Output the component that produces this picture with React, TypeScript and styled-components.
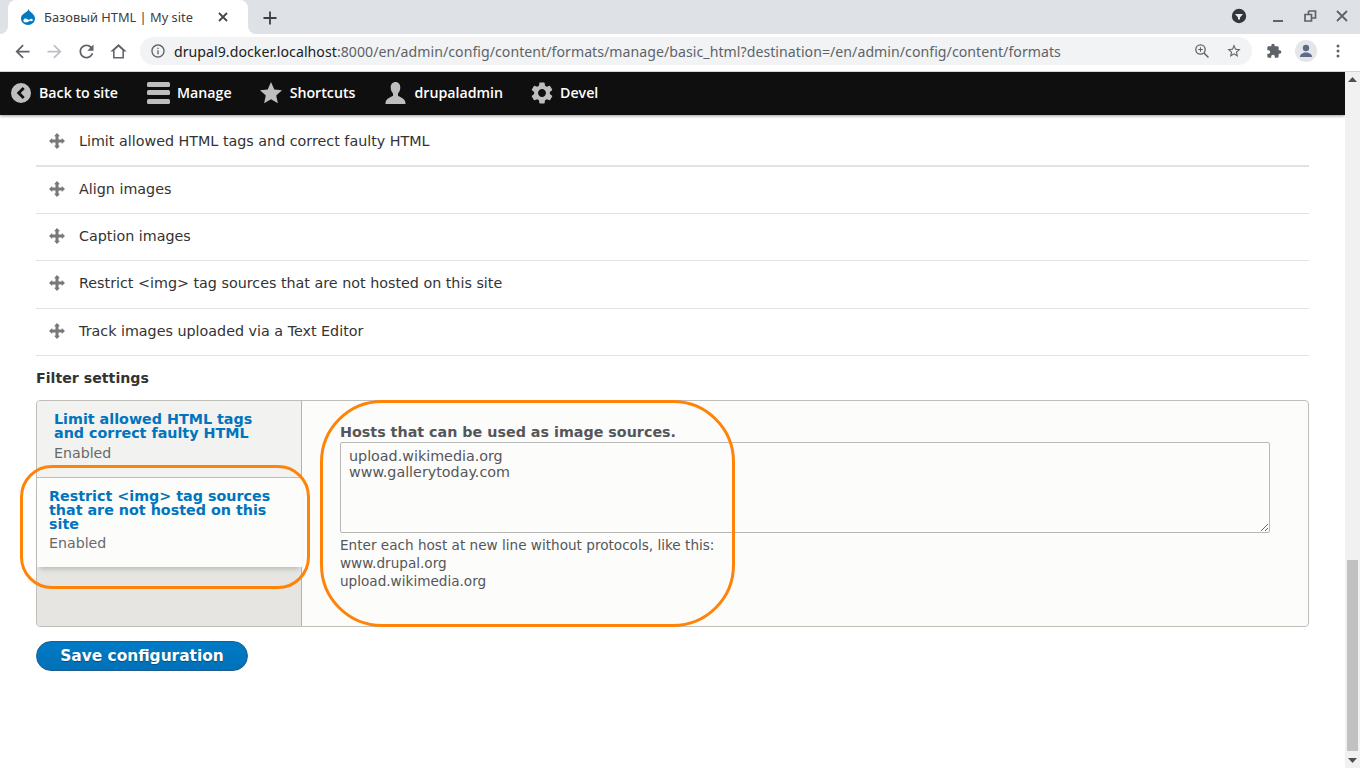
import React from "react";
import styled, { createGlobalStyle } from "styled-components";

const Global = createGlobalStyle`
  html, body { margin: 0; padding: 0; height: 768px; overflow: hidden; background: #fff; }
  * { box-sizing: border-box; }
`;

const Screen = styled.div`
  width: 1360px; height: 768px; display: flex; flex-direction: column; overflow: hidden;
`;
const TabStrip = styled.div`
  height: 34px; background: #dee1e6; display: flex; align-items: flex-end; padding-left: 8px; flex: none;
`;
const Tab = styled.div`
  position: relative; width: 240px; height: 34px; background: #fff; border-radius: 8px 8px 0 0;
  display: flex; align-items: center; padding: 0 0 0 12px; gap: 8px;
  &::before, &::after {
    content: ""; position: absolute; bottom: 0; width: 8px; height: 8px; background: #fff;
  }
  &::before { left: -8px; clip-path: path("M0 8 A8 8 0 0 0 8 0 L8 8 Z"); }
  &::after { right: -8px; clip-path: path("M8 8 A8 8 0 0 1 0 0 L0 8 Z"); }
`;
const TabTitle = styled.span`
  font: 400 12.85px "Noto Sans", sans-serif; color: #3c4043; flex: 1; white-space: nowrap;
`;
const TabClose = styled.svg`
  width: 16px; height: 16px; margin-right: 17px; flex: none;
`;
const NewTab = styled.svg`
  width: 18px; height: 18px; margin: 0 0 7px 13px; flex: none;
`;
const WindowControls = styled.div`
  margin-left: auto; align-self: stretch; display: flex; align-items: center; padding-bottom: 3px;
`;
const ProfileDot = styled.svg`
  width: 16px; height: 16px; margin-right: 23px;
`;
const WinButton = styled.svg`
  width: 16px; height: 16px; margin-right: 16px; flex: none;
  &:last-child { margin-right: 10px; }
`;

const AddressRow = styled.div`
  background: #fff; border-bottom: 1px solid #d3d5d8; flex: none;
  display: flex; align-items: center; padding: 0 0 3px 12px; height: 38px;
`;
const NavIcon = styled.svg<{ $gap?: number }>`
  width: 21px; height: 21px; flex: none; margin-right: ${(p) => p.$gap ?? 11}px;
`;
const UrlPill = styled.div`
  width: 1112px; height: 28px; border-radius: 14px; background: #f1f3f4; margin-left: 11px;
  display: flex; align-items: center; padding: 0 10px 0 10px; flex: none;
`;
const InfoIcon = styled.svg`
  width: 16px; height: 16px; flex: none; margin-right: 8px;
`;
const UrlText = styled.div`
  font: 400 14.13px "Noto Sans", sans-serif; color: #5f6368; flex: 1; white-space: nowrap; letter-spacing: .04px;
`;
const UrlHost = styled.span`
  color: #202124;
`;
const PillIcon = styled.svg<{ $gap: number }>`
  width: 16px; height: 16px; flex: none; margin-left: ${(p) => p.$gap}px;
`;
const Puzzle = styled.svg`
  width: 16px; height: 16px; fill: #5f6368; margin-left: 14px; flex: none;
`;
const Avatar = styled.div`
  width: 22px; height: 22px; border-radius: 50%; background: #e4e6ea; margin-left: 13px;
  display: flex; align-items: center; justify-content: center; flex: none;
`;
const Kebab = styled.svg`
  width: 16px; height: 16px; margin-left: 13px; flex: none;
`;

const Viewport = styled.div`
  flex: 1; display: flex; min-height: 0;
`;
const Page = styled.div`
  position: relative; flex: 1; min-width: 0; overflow: hidden; display: flex; flex-direction: column;
`;
const AdminBar = styled.nav`
  position: relative; z-index: 5; height: 43px; flex: none; background: #0f0f0f;
  box-shadow: 0 1px 3px rgba(0,0,0,.4); display: flex; align-items: center; padding: 0 0 1px 11px;
`;
const BarItem = styled.a<{ $gap: number }>`
  display: flex; align-items: center; color: #fff; font: 600 14.2px "Open Sans", sans-serif;
  margin-right: ${(p) => p.$gap}px; white-space: nowrap;
`;
const BarLabel = styled.span`
  margin-bottom: 2px;
`;
const BarIcon = styled.svg<{ $w: number; $gap: number }>`
  width: ${(p) => p.$w}px; height: 22px; margin-right: ${(p) => p.$gap}px; flex: none; fill: #bebebe;
`;

const Content = styled.main`
  padding: 0 36px; margin-top: -18px; display: flex; flex-direction: column;
`;
const WeightToggle = styled.a`
  align-self: flex-end; margin-right: 4px;
  font: 400 13px/18px "DejaVu Sans", sans-serif; color: #0074bd;
`;
const FilterRow = styled.div<{ $heavy?: boolean; $h: number }>`
  height: ${(p) => p.$h}px; display: flex; align-items: center;
  padding: ${(p) => (p.$heavy ? "2px 0 0 13px" : `0 0 ${p.$h - 45}px 13px`)};
  border-bottom: ${(p) => (p.$heavy ? 2 : 1)}px solid #e3e2de; gap: 14px;
  font: 400 14.3px "DejaVu Sans", sans-serif; color: #333;
`;
const Grip = styled.svg`
  width: 16px; height: 16px; flex: none;
`;
const SectionTitle = styled.h4`
  margin: 14px 0 13px; font: 700 14.2px/17px "DejaVu Sans", sans-serif; color: #333;
`;
const Panel = styled.div`
  height: 227px; border: 1px solid #bfbfba; border-radius: 4px; display: flex; background: #fcfcfa;
`;
const Side = styled.div`
  width: 265px; flex: none; background: #e6e5e1; border-right: 1px solid #b3b3ae;
  border-radius: 4px 0 0 4px; display: flex; flex-direction: column;
`;
const TabLink = styled.div<{ $active?: boolean }>`
  background: ${(p) => (p.$active ? "#fcfcfa" : "#f2f2f0")};
  height: ${(p) => (p.$active ? 90 : 76)}px;
  padding: ${(p) => (p.$active ? "11px 12px 0" : "11px 20px 0 17px")};
  margin-right: ${(p) => (p.$active ? "-1px" : "0")};
  border-top: ${(p) => (p.$active ? "1px solid #bfbfba" : "none")};
  box-shadow: ${(p) => (p.$active ? "0 5px 5px -3px rgba(0,0,0,.2)" : "none")};
  border-radius: ${(p) => (p.$active ? "0" : "4px 0 0 0")};
`;
const TabName = styled.div`
  font: 700 14.3px/14px "DejaVu Sans", sans-serif; color: #0074bd;
`;
const TabState = styled.div<{ $active?: boolean }>`
  font: 400 14.2px/17px "DejaVu Sans", sans-serif; color: #68696a; margin-top: ${(p) => (p.$active ? 4 : 5)}px;
`;
const Pane = styled.div`
  flex: 1; padding: 23px 38px 0; color: #55565a;
`;
const FieldLabel = styled.label`
  display: block; font: 700 14.3px/17px "DejaVu Sans", sans-serif; margin-bottom: 1px; color: #55565a;
`;
const Hosts = styled.textarea`
  display: block; width: 930px; height: 91px; border: 1px solid #b8b8b8; border-radius: 2px; background: #fcfcfa;
  padding: 5px 8px; margin: 0; font: 400 14.3px/16px "DejaVu Sans", sans-serif; color: #55565a; outline: none; resize: vertical;
`;
const Help = styled.div`
  font: 400 13.6px/18px "DejaVu Sans", sans-serif; margin-top: 3px; color: #55565a;
`;
const SaveButton = styled.button`
  margin-top: 14px; align-self: flex-start; width: 212px; height: 30px; border-radius: 15px;
  border: 1px solid #1a5d8f; background: linear-gradient(#007ac6, #0071b8); color: #fff;
  font: 700 15.4px "DejaVu Sans", sans-serif; padding: 0 0 1px; text-shadow: 0 1px 1px rgba(0,0,0,.3);
`;
const Highlight = styled.div<{ $x: number; $y: number; $w: number; $h: number; $r: number }>`
  position: absolute; left: ${(p) => p.$x}px; top: ${(p) => p.$y}px; width: ${(p) => p.$w}px; height: ${(p) => p.$h}px;
  border: 3px solid #ff8308; border-radius: ${(p) => p.$r}px; pointer-events: none; z-index: 3;
`;

const Scrollbar = styled.div`
  width: 15px; flex: none; background: #f1f1f1; display: flex; flex-direction: column; align-items: center;
  justify-content: space-between; padding: 5px 0;
`;
const ScrollArrow = styled.svg`
  width: 9px; height: 5px; fill: #505050; flex: none;
`;
const ScrollLower = styled.div`
  display: flex; flex-direction: column; align-items: center; gap: 7px;
`;
const ScrollThumb = styled.div`
  width: 11px; height: 191px; background: #c1c1c1;
`;

const M = {
  back: "M20 11H7.83l5.59-5.59L12 4l-8 8 8 8 1.41-1.41L7.83 13H20v-2z",
  reload: "M17.65 6.35C16.2 4.9 14.21 4 12 4c-4.42 0-7.99 3.58-7.99 8s3.57 8 7.99 8c3.73 0 6.84-2.55 7.73-6h-2.08c-.82 2.33-3.04 4-5.65 4-3.31 0-6-2.69-6-6s2.69-6 6-6c1.66 0 3.14.69 4.22 1.78L13 11h7V4l-2.35 2.35z",
  info: "M11 7h2v2h-2zm0 4h2v6h-2zm1-9C6.48 2 2 6.48 2 12s4.48 10 10 10 10-4.48 10-10S17.52 2 12 2zm0 18c-4.41 0-8-3.59-8-8s3.59-8 8-8 8 3.59 8 8-3.59 8-8 8z",
  star: "M22 9.24l-7.19-.62L12 2 9.19 8.63 2 9.24l5.46 4.73L5.82 21 12 17.27 18.18 21l-1.63-7.03L22 9.24zM12 15.4l-3.76 2.27 1-4.28-3.32-2.88 4.38-.38L12 6.1l1.71 4.04 4.38.38-3.32 2.88 1 4.28L12 15.4z",
  puzzle: "M20.5 11H19V7c0-1.1-.9-2-2-2h-4V3.5C13 2.12 11.88 1 10.5 1S8 2.12 8 3.5V5H4c-1.1 0-1.99.9-1.99 2v3.8H3.5c1.49 0 2.7 1.21 2.7 2.7s-1.21 2.7-2.7 2.7H2V20c0 1.1.9 2 2 2h3.8v-1.5c0-1.49 1.21-2.7 2.7-2.7 1.49 0 2.7 1.21 2.7 2.7V22H17c1.1 0 2-.9 2-2v-4h1.5c1.38 0 2.5-1.12 2.5-2.5S21.88 11 20.5 11z",
  gear: "M19.14 12.94c.04-.3.06-.61.06-.94 0-.32-.02-.64-.07-.94l2.03-1.58c.18-.14.23-.41.12-.61l-1.92-3.32c-.12-.22-.37-.29-.59-.22l-2.39.96c-.5-.38-1.03-.7-1.62-.94l-.36-2.54c-.04-.24-.24-.41-.48-.41h-3.84c-.24 0-.43.17-.47.41l-.36 2.54c-.59.24-1.13.57-1.62.94l-2.39-.96c-.22-.08-.47 0-.59.22L2.74 8.87c-.12.21-.08.47.12.61l2.03 1.58c-.05.3-.09.63-.09.94s.02.64.07.94l-2.03 1.58c-.18.14-.23.41-.12.61l1.92 3.32c.12.22.37.29.59.22l2.39-.96c.5.38 1.03.7 1.62.94l.36 2.54c.05.24.24.41.48.41h3.84c.24 0 .44-.17.47-.41l.36-2.54c.59-.24 1.13-.56 1.62-.94l2.39.96c.22.08.47 0 .59-.22l1.92-3.32c.12-.22.07-.47-.12-.61l-2.01-1.58zM12 15.6c-1.98 0-3.6-1.62-3.6-3.6s1.62-3.6 3.6-3.6 3.6 1.62 3.6 3.6-1.62 3.6-3.6 3.6z",
};

const GripIcon = () => (
  <Grip viewBox="0 0 16 16" fill="#787878">
    <path d="M8 0l3 3.200H9.500v3.300h3.300V5L16 8l-3.200 3V9.500H9.500v3.300H11L8 16l-3-3.200h1.500V9.500H3.200V11L0 8l3.200-3v1.500h3.300V3.200H5z" />
  </Grip>
);

const rows = [
  { t: "Limit allowed HTML tags and correct faulty HTML", h: 52, heavy: true },
  { t: "Align images", h: 47 },
  { t: "Caption images", h: 47 },
  { t: "Restrict <img> tag sources that are not hosted on this site", h: 48 },
  { t: "Track images uploaded via a Text Editor", h: 47 },
];

export default function App() {
  return (
    <Screen>
      <Global />
      <TabStrip>
        <Tab>
          <svg width="16" height="16" viewBox="0 0 16 16" style={{ flex: "none" }}>
            <path d="M8.6 0C9 2.2 11 3 12.4 4.4 14 5.9 15 7.6 15 9.6 15 13.300 12 16 8 16S1 13.300 1 9.600C1 6.300 3.500 5 5.500 3.500 7 2.400 8.200 1.500 8.600 0z" fill="#0678be" />
            <path d="M3.500 11c1-1.800 2.700-1.800 4-.8 1 .8 1.700.8 2.500 0 1-1 2.500-.6 2.800.6.200 1.300-1 1.800-1.800 1.200-.8-.500-1.300-.3-2 .3-.8.800-2 1.300-3.200.9C4.500 13.800 3 12.500 3.500 11z" fill="#fff" />
          </svg>
          <TabTitle>Базовый HTML | My site</TabTitle>
          <TabClose viewBox="0 0 16 16"><path d="M4 4l8 8M12 4l-8 8" stroke="#45484c" strokeWidth="1.800" /></TabClose>
        </Tab>
        <NewTab viewBox="0 0 18 18"><path d="M9 2.500v13M2.500 9h13" stroke="#3c4043" strokeWidth="1.800" /></NewTab>
        <WindowControls>
          <ProfileDot viewBox="0 0 16 16">
            <circle cx="8" cy="8" r="7.200" fill="#35363a" />
            <path d="M4 6h8L9 9.500v2H7v-2z" fill="#e8eaed" />
          </ProfileDot>
          <WinButton viewBox="0 0 16 16"><path d="M3 13h10" stroke="#5f6368" strokeWidth="2" /></WinButton>
          <WinButton viewBox="0 0 16 16"><path d="M6.500 3h7v7h-4M3 6.500h6.500v6.500H3z M6.500 3v3.500" stroke="#5f6368" strokeWidth="1.700" fill="none" /></WinButton>
          <WinButton viewBox="0 0 16 16"><path d="M3 3l10 10M13 3L3 13" stroke="#5f6368" strokeWidth="1.800" /></WinButton>
        </WindowControls>
      </TabStrip>
      <AddressRow>
        <NavIcon viewBox="0 0 24 24" fill="#5f6368"><path d={M.back} /></NavIcon>
        <NavIcon viewBox="0 0 24 24" fill="#bdc1c6" style={{ transform: "scaleX(-1)" }}><path d={M.back} /></NavIcon>
        <NavIcon viewBox="0 0 24 24" fill="#5f6368"><path d={M.reload} /></NavIcon>
        <NavIcon viewBox="-1.500 -1.500 27 27" fill="#5f6368" $gap={0}><path fillRule="evenodd" d="M12 2.500L1.500 12H5v9h14v-9h3.500zM7 19v-8.700l5-4.500 5 4.500V19z" /></NavIcon>
        <UrlPill>
          <InfoIcon viewBox="0 0 24 24" fill="#5f6368"><path d={M.info} /></InfoIcon>
          <UrlText><UrlHost>drupal9.docker.localhost</UrlHost>:8000/en/admin/config/content/formats/manage/basic_html?destination=/en/admin/config/content/formats</UrlText>
          <PillIcon viewBox="0 0 16 16" $gap={0}>
            <circle cx="6.500" cy="6.500" r="4.700" fill="none" stroke="#5f6368" strokeWidth="1.300" />
            <path d="M10 10l4.500 4.500" stroke="#5f6368" strokeWidth="1.500" />
            <path d="M6.500 4.200v4.600M4.200 6.500h4.600" stroke="#5f6368" strokeWidth="1.100" />
          </PillIcon>
          <PillIcon viewBox="0 0 24 24" fill="#5f6368" $gap={16}><path d={M.star} /></PillIcon>
        </UrlPill>
        <Puzzle viewBox="0 0 24 24"><path d={M.puzzle} /></Puzzle>
        <Avatar>
          <svg width="16" height="16" viewBox="0 0 16 16" fill="#5b6b88">
            <circle cx="8" cy="5" r="3.200" />
            <path d="M2 14c0-3 3-4.500 6-4.500s6 1.500 6 4.500z" />
          </svg>
        </Avatar>
        <Kebab viewBox="0 0 16 16" fill="#5f6368">
          <circle cx="8" cy="3" r="1.500" /><circle cx="8" cy="8" r="1.500" /><circle cx="8" cy="13" r="1.500" />
        </Kebab>
      </AddressRow>
      <Viewport>
        <Page>
          <AdminBar>
            <BarItem $gap={29}>
              <BarIcon $w={20} $gap={8} viewBox="0 0 20 20">
                <path fillRule="evenodd" d="M10 0a10 10 0 1 0 0 20 10 10 0 0 0 0-20zM11.700 4l2 2-4 4 4 4-2 2-6-6z" />
              </BarIcon>
              <BarLabel>Back to site</BarLabel>
            </BarItem>
            <BarItem $gap={28}>
              <BarIcon $w={23} $gap={7} viewBox="0 0 23 22">
                <rect x="0" y="0" width="23" height="5" rx="1.500" />
                <rect x="0" y="8" width="23" height="5" rx="1.500" />
                <rect x="0" y="17" width="23" height="5" rx="1.500" />
              </BarIcon>
              <BarLabel>Manage</BarLabel>
            </BarItem>
            <BarItem $gap={30}>
              <BarIcon $w={22} $gap={8} viewBox="0 0 22 22">
                <path d="M11 0l3.300 7.400 7.700.800-5.800 5.200 1.700 7.800L11 17.200 4.100 21.200l1.700-7.800L0 8.200l7.700-.8z" />
              </BarIcon>
              <BarLabel>Shortcuts</BarLabel>
            </BarItem>
            <BarItem $gap={28}>
              <BarIcon $w={21} $gap={8} viewBox="0 0 21 22">
                <path d="M10.500 0c3 0 4.800 2.300 4.800 5.500 0 2.500-1 4.500-2.300 6v2.200c1.800 1.200 7.500 2.800 7.500 7.300v1H.5v-1c0-4.500 5.700-6.100 7.500-7.300v-2.200c-1.300-1.500-2.300-3.500-2.300-6C5.700 2.300 7.500 0 10.500 0z" />
              </BarIcon>
              <BarLabel>drupaladmin</BarLabel>
            </BarItem>
            <BarItem $gap={0}>
              <BarIcon $w={22} $gap={7} viewBox="2 2 20 20"><path d={M.gear} /></BarIcon>
              <BarLabel>Devel</BarLabel>
            </BarItem>
          </AdminBar>
          <Content>
            <WeightToggle>Show row weights</WeightToggle>
            {rows.map((r) => (
              <FilterRow key={r.t} $h={r.h} $heavy={r.heavy}>
                <GripIcon />
                {r.t}
              </FilterRow>
            ))}
            <SectionTitle>Filter settings</SectionTitle>
            <Panel>
              <Side>
                <TabLink>
                  <TabName>Limit allowed HTML tags and correct faulty HTML</TabName>
                  <TabState>Enabled</TabState>
                </TabLink>
                <TabLink $active>
                  <TabName>Restrict &lt;img&gt; tag sources that are not hosted on this site</TabName>
                  <TabState $active>Enabled</TabState>
                </TabLink>
              </Side>
              <Pane>
                <FieldLabel>Hosts that can be used as image sources.</FieldLabel>
                <Hosts readOnly defaultValue={"upload.wikimedia.org\nwww.gallerytoday.com"} />
                <Help>
                  Enter each host at new line without protocols, like this:<br />
                  www.drupal.org<br />
                  upload.wikimedia.org
                </Help>
              </Pane>
            </Panel>
            <SaveButton>Save configuration</SaveButton>
          </Content>
          <Highlight $x={20} $y={393} $w={290} $h={124} $r={32} />
          <Highlight $x={320} $y={328} $w={415} $h={227} $r={62} />
        </Page>
        <Scrollbar>
          <ScrollArrow viewBox="0 0 9 5"><path d="M4.500 0L9 5H0z" /></ScrollArrow>
          <ScrollLower>
            <ScrollThumb />
            <ScrollArrow viewBox="0 0 9 5"><path d="M0 0h9L4.500 5z" /></ScrollArrow>
          </ScrollLower>
        </Scrollbar>
      </Viewport>
    </Screen>
  );
}
